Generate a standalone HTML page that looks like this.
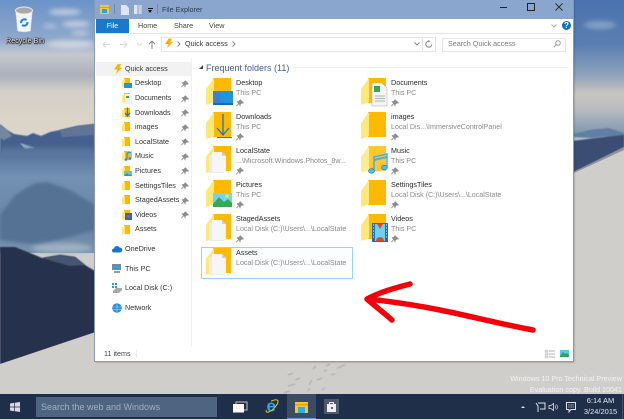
<!DOCTYPE html>
<html><head><meta charset="utf-8"><style>
html,body{margin:0;padding:0}
body{width:624px;height:419px;overflow:hidden;position:relative;font-family:"Liberation Sans",sans-serif;background:#d0cecb}
.a{position:absolute;white-space:nowrap}
svg{position:absolute;overflow:visible}
.t{position:absolute;white-space:nowrap;font-size:7.2px;line-height:10px;color:#2a2a2a}
.s{color:#8a8a8a;font-size:7.1px}
.n{color:#333}
</style></head><body>
<svg style="left:0;top:0" width="624" height="419" viewBox="0 0 624 419">
<defs>
<linearGradient id="skyL" gradientUnits="userSpaceOnUse" x1="0" y1="0" x2="0" y2="130"><stop offset="0" stop-color="#6b93c8"/><stop offset=".3" stop-color="#8fa8cc"/><stop offset=".42" stop-color="#c4c8cf"/><stop offset=".58" stop-color="#abb0bc"/><stop offset=".7" stop-color="#d4cfc8"/><stop offset="1" stop-color="#dcd5c9"/></linearGradient>
<linearGradient id="skyR" gradientUnits="userSpaceOnUse" x1="0" y1="0" x2="0" y2="135"><stop offset="0" stop-color="#4a72ad"/><stop offset=".33" stop-color="#5a7fb2"/><stop offset=".55" stop-color="#8ea1bb"/><stop offset=".7" stop-color="#c8c5c0"/><stop offset=".82" stop-color="#b5bac0"/><stop offset="1" stop-color="#7d96b0"/></linearGradient>
<linearGradient id="haze" gradientUnits="userSpaceOnUse" x1="0" y1="150" x2="0" y2="260"><stop offset="0" stop-color="#54709a"/><stop offset=".25" stop-color="#7391b2"/><stop offset=".7" stop-color="#6884a5"/><stop offset="1" stop-color="#7d95ae"/></linearGradient>
<filter id="b2" x="-50%" y="-300%" width="200%" height="700%"><feGaussianBlur stdDeviation="2.5"/></filter>
<filter id="b1" x="-20%" y="-20%" width="140%" height="140%"><feGaussianBlur stdDeviation="1.5"/></filter>
<filter id="b5" x="-20%" y="-20%" width="140%" height="140%"><feGaussianBlur stdDeviation=".6"/></filter>
</defs>
<rect width="95" height="135" fill="url(#skyL)"/>
<rect x="573" width="51" height="135" fill="url(#skyR)"/>
<g fill="#dfe2e6" filter="url(#b2)" opacity=".7">
<ellipse cx="65" cy="12" rx="16" ry="3"/><ellipse cx="76" cy="24" rx="14" ry="3"/><ellipse cx="50" cy="26" rx="7" ry="1.5"/><ellipse cx="70" cy="44" rx="24" ry="4"/><ellipse cx="80" cy="33" rx="9" ry="2"/>
</g>
<ellipse cx="600" cy="25" rx="16" ry="4" fill="#a3bad6" filter="url(#b2)" opacity=".6"/>
<polygon points="0,124 7,130 14,134 27,136 33,133 41,136 50,132 60,130 77,126 94,124 95,160 0,160" fill="#45608e" filter="url(#b5)"/>
<polygon points="0,125 7,130 12,136 4,140 0,138" fill="#75879f" filter="url(#b5)"/>
<polygon points="60,130 77,126 94,124 95,135 62,137" fill="#617496" filter="url(#b5)"/>
<polygon points="20,143 35,148 25,149" fill="#a8b6c9" filter="url(#b5)"/>
<rect x="0" y="153" width="95" height="100" fill="url(#haze)"/>
<rect x="0" y="148" width="95" height="10" fill="#5a769e" filter="url(#b2)"/>
<polygon points="0,215 15,195 35,183 48,182 70,190 95,205 95,230 40,245 0,240" fill="#557295" filter="url(#b1)"/>
<ellipse cx="62" cy="248" rx="30" ry="5" fill="#9db0c2" filter="url(#b2)"/>
<polygon points="0,247 15,247 35,255 42,258 60,255 75,257 85,265 95,271 95,335 0,366" fill="#25324e" filter="url(#b5)"/>
<polygon points="42,258 60,255 75,257 85,265 70,266" fill="#46566f" filter="url(#b5)"/>
<polygon points="573,134 590,130 608,128 624,133 624,150 573,172" fill="#607fa2" filter="url(#b5)"/>
<polygon points="573,137 592,138 610,136 590,141 573,141" fill="#cfd8df" opacity=".7" filter="url(#b5)"/>
<polygon points="573,141 595,138 624,135 624,147 573,172" fill="#3a4e72" filter="url(#b5)"/>
<polygon points="574,172 624,147 624,419 0,419 0,364" fill="#d0cecb"/>
<polygon points="574,172 624,147 624,150 574,173" fill="#55565c" opacity=".5"/>
<g stroke="#85878a" stroke-width="1" fill="none" opacity=".55" filter="url(#b5)">
<path d="M293 373l-5 2M300 378l-5 2M295 384l-7 2M290 391l-6 2M312 380l-3 5M316 366l-3 3M310 388l-2 3M327 370l-3 1M322 378l-5 2M330 364l-4 2M345 365l-8 3M335 374l-4 1M325 388l-3 2"/>
</g>
</svg>

<!-- recycle bin -->
<svg style="left:14px;top:6px" width="20" height="26" viewBox="0 0 20 26">
<path d="M1.500 4 L3.500 25 Q10 27 16.500 25 L18.500 4Z" fill="#f2f4f6" stroke="#c8ccd0" stroke-width=".5"/>
<ellipse cx="10" cy="4.500" rx="8.500" ry="3.500" fill="#a9a9a7" stroke="#e8e8e8"/>
<path d="M7 17a3.500 3.500 0 0 1 5.500-3M13.500 16a3.500 3.500 0 0 1-5.500 3" stroke="#1e88e0" stroke-width="2" fill="none"/>
</svg>
<div class="a" style="left:6px;top:36px;font-size:7.200px;line-height:10px;color:#eee;text-shadow:0 0 1px #000,0 1px 1px #000,1px 0 1px #000">Recycle Bin</div>

<div class="a" style="left:95px;top:0;width:478px;height:361px;background:#fff;box-shadow:0 0 0 1px #8799b8,1px 1px 2px rgba(30,30,30,.4)"></div>
<div class="a" style="left:95px;top:0;width:478px;height:19px;background:#8aa6cf"></div>

<!-- title icons -->
<svg style="left:100px;top:5px" width="10" height="10" viewBox="0 0 10 10"><rect x="0" y="0" width="9" height="9" fill="#f6c83a"/><rect x="0" y="2" width="9" height="1" fill="#e9a100"/><rect x="2" y="4" width="5" height="4" fill="#2aa4e8"/></svg>
<div class="a" style="left:114px;top:4px;width:1px;height:10px;background:#7488a8"></div>
<svg style="left:121px;top:5px" width="8" height="10" viewBox="0 0 8 10"><path d="M0 0h5l3 3v7H0z" fill="#dfe5ee"/></svg>
<svg style="left:134px;top:5px" width="8" height="9" viewBox="0 0 8 9"><rect width="3.400" height="9" fill="#dfe5ee"/><rect x="4.400" width="3.400" height="9" fill="#c4d0e2"/></svg>
<div class="a" style="left:148px;top:8px;width:5px;height:1px;background:#111"></div>
<div class="a" style="left:148px;top:10px;width:0;height:0;border:2.500px solid transparent;border-top:3px solid #111;border-bottom:0"></div>
<div class="a" style="left:157px;top:4px;width:1px;height:10px;background:#7488a8"></div>
<div class="t" style="left:162px;top:5px;color:#2c3a50">File Explorer</div>

<!-- window buttons -->
<div class="a" style="left:500px;top:7px;width:7px;height:1px;background:#222"></div>
<div class="a" style="left:527px;top:3px;width:6px;height:6px;border:1px solid #222"></div>
<svg style="left:555px;top:3px" width="8" height="8" viewBox="0 0 9 9"><path d="M.5.500l8 8M8.500.500l-8 8" stroke="#222" stroke-width="1"/></svg>

<!-- ribbon -->
<div class="a" style="left:96px;top:19px;width:33px;height:14px;background:#1979ca;color:#fff;font-size:7.200px;line-height:14px;text-align:center">File</div>
<div class="t" style="left:138px;top:21px;color:#444">Home</div>
<div class="t" style="left:174px;top:21px;color:#444">Share</div>
<div class="t" style="left:209px;top:21px;color:#444">View</div>
<div class="a" style="left:96px;top:33px;width:476px;height:1px;background:#e4e4e4"></div>
<svg style="left:551px;top:24px" width="6" height="4" viewBox="0 0 6 4"><path d="M.5.500L3 3 5.500.5" stroke="#aaa" fill="none"/></svg>
<div class="a" style="left:562px;top:21px;width:9px;height:9px;border-radius:50%;background:#0f6fc6;color:#fff;font-size:8px;line-height:9px;text-align:center;font-weight:bold">?</div>

<!-- nav row -->
<svg style="left:103px;top:40px" width="70" height="10" viewBox="0 0 70 10" fill="none">
<path d="M0 4.500h7M0 4.500L3 1.500M0 4.500L3 7.500" stroke="#d8d8d8"/>
<path d="M17 4.500h7M24 4.500L21 1.500M24 4.500L21 7.500" stroke="#d8d8d8"/>
<path d="M34 3l2.500 2.500L39 3" stroke="#dcdcdc"/>
<path d="M49 9V1M49 1L46 4M49 1L52 4" stroke="#888"/>
</svg>
<div class="a" style="left:161px;top:37px;width:273px;height:13px;border:1px solid #e6e6e6"></div>
<svg style="left:165px;top:38px" width="8" height="11" viewBox="0 0 9 11"><path d="M4 0h4L6 4h3L2 11l2-5H0z" fill="#f5b400"/></svg>
<svg style="left:177px;top:41px" width="4" height="6" viewBox="0 0 4 6"><path d="M.5.500L3 3 .5 5.500" stroke="#888" fill="none"/></svg>
<div class="t" style="left:185px;top:39px;color:#333">Quick access</div>
<svg style="left:232px;top:41px" width="4" height="6" viewBox="0 0 4 6"><path d="M.5.500L3 3 .5 5.500" stroke="#888" fill="none"/></svg>
<svg style="left:414px;top:42px" width="6" height="4" viewBox="0 0 6 4"><path d="M.5.500L3 3 5.500.5" stroke="#888" fill="none"/></svg>
<div class="a" style="left:422px;top:37px;width:1px;height:14px;background:#e6e6e6"></div>
<svg style="left:425px;top:40px" width="8" height="8" viewBox="0 0 8 8"><path d="M6.800 4.500A3 3 0 1 1 4 1.200" stroke="#888" fill="none"/><path d="M3.500 0l2 1.300-2 1.200z" fill="#888"/></svg>
<div class="a" style="left:442px;top:38px;width:122px;height:12px;border:1px solid #e6e6e6"></div>
<div class="t" style="left:448px;top:39px;color:#777">Search Quick access</div>
<svg style="left:553px;top:40px" width="8" height="8" viewBox="0 0 8 8"><circle cx="5" cy="3" r="2.300" stroke="#999" fill="none"/><path d="M3.300 4.700L.8 7.200" stroke="#999"/></svg>

<!-- nav pane -->
<div class="a" style="left:96px;top:62px;width:95px;height:14px;background:#f2f2f2"></div>
<div class="a" style="left:191px;top:58px;width:1px;height:288px;background:#f0f0f0"></div>
<svg style="left:114px;top:64px" width="8" height="10" viewBox="0 0 9 11"><path d="M4 0h4L6 4h3L2 11l2-5H0z" fill="#f5b400"/></svg>
<div class="t n" style="left:125px;top:64px">Quick access</div>

<svg width="0" height="0" style="left:0;top:0"><defs>
<g id="sf"><rect x="2" y="0" width="6" height="9" fill="#ffb900"/><path d="M0 2.500L3 1V9.500L0 9.500z" fill="#ffe97e"/></g>
<g id="pin"><path d="M4 1l4 4-1 .6-1-.4-1.600 1.600.1 1.200-.6.6L3 6 .6 8.400 0 8l2.200-2.600L.6 3.800l.6-.6 1.200.1L4 1.600z" fill="#8e8e8e"/></g>
<g id="lf"><rect x="8" y="0" width="18" height="25" fill="#ffb900"/><path d="M9 0L1 11V27L9 24z" fill="#fde879"/></g>
<g id="pg"><path d="M4 9h12l3 3v15H4z" fill="#ececec"/><path d="M7 6h10l4 4v16H7z" fill="#f6f6f6"/><path d="M17 6l4 4h-4z" fill="#d0d0d0"/></g>
</defs></svg>

<!-- nav children -->
<svg style="left:122px;top:78px" width="10" height="160" viewBox="0 0 10 160">
<use href="#sf" y="0"/><rect x="2" y="5" width="8" height="5" fill="#1d97e0"/>
<use href="#sf" y="15"/><path d="M3 16h5l2 2v8H3z" fill="#f1f1f1"/><rect x="4" y="18" width="3" height="2" fill="#39a854"/>
<use href="#sf" y="30"/><path d="M5.500 29.500v8M3 35l2.500 3L8 35" stroke="#1878c8" stroke-width="1.200" fill="none"/>
<use href="#sf" y="44"/><use href="#sf" y="59"/>
<use href="#sf" y="73"/><path d="M5 81V75l4-1v6" stroke="#2488d8" fill="none"/><circle cx="4" cy="81.500" r="1.300" fill="#2488d8"/><circle cx="8" cy="80.500" r="1.300" fill="#2488d8"/>
<use href="#sf" y="88"/><rect x="2" y="93" width="8" height="5" fill="#5ec8d8"/><path d="M2 98l3-3 2 2 1-1 2 2z" fill="#33a457"/>
<use href="#sf" y="103"/><use href="#sf" y="117"/>
<use href="#sf" y="132"/><rect x="3" y="135" width="7" height="7" fill="#2a6bb0"/><rect x="5" y="137" width="3" height="3" fill="#d94b3a"/>
<use href="#sf" y="147"/>
</svg>
<div class="t n" style="left:135px;top:78px">Desktop</div>
<div class="t n" style="left:135px;top:93px">Documents</div>
<div class="t n" style="left:135px;top:108px">Downloads</div>
<div class="t n" style="left:135px;top:122px">images</div>
<div class="t n" style="left:135px;top:137px">LocalState</div>
<div class="t n" style="left:135px;top:151px">Music</div>
<div class="t n" style="left:135px;top:166px">Pictures</div>
<div class="t n" style="left:135px;top:181px">SettingsTiles</div>
<div class="t n" style="left:135px;top:195px">StagedAssets</div>
<div class="t n" style="left:135px;top:210px">Videos</div>
<div class="t n" style="left:135px;top:224px">Assets</div>
<svg style="left:181px;top:79px" width="9" height="140" viewBox="0 0 9 140">
<use href="#pin" y="0"/><use href="#pin" y="15"/><use href="#pin" y="29"/><use href="#pin" y="44"/><use href="#pin" y="58"/><use href="#pin" y="73"/><use href="#pin" y="87"/><use href="#pin" y="102"/><use href="#pin" y="117"/><use href="#pin" y="131"/>
</svg>

<svg style="left:112px;top:245px" width="10" height="8" viewBox="0 0 10 8"><path d="M2 7.500a2 2 0 0 1 0-4 3 3 0 0 1 5.500-1 2.500 2.500 0 0 1 .6 5z" fill="#1878c8"/></svg>
<div class="t n" style="left:125px;top:244px">OneDrive</div>
<svg style="left:112px;top:264px" width="10" height="10" viewBox="0 0 10 10"><rect x="0" y="0" width="9" height="6" fill="#7b8a96"/><rect x="1" y="1" width="7" height="4" fill="#34a0d8"/><rect x="2" y="7" width="6" height="2" fill="#9a9a9a"/></svg>
<div class="t n" style="left:125px;top:264px">This PC</div>
<svg style="left:112px;top:283px" width="10" height="10" viewBox="0 0 10 10"><rect x="0" y="0" width="2" height="2" fill="#2a9ae0"/><rect x="3" y="0" width="2" height="2" fill="#2a9ae0"/><rect x="0" y="3" width="2" height="2" fill="#2a9ae0"/><rect x="3" y="3" width="2" height="2" fill="#2a9ae0"/><path d="M1 8l3-3h6v2l-3 3H1z" fill="#a9a9a9"/></svg>
<div class="t n" style="left:125px;top:283px">Local Disk (C:)</div>
<svg style="left:112px;top:303px" width="10" height="10" viewBox="0 0 10 10"><circle cx="5" cy="5" r="4.800" fill="#2a8fd8"/><path d="M1 4h8M1 6.500h8M5 .5v9" stroke="#a6dcf5" stroke-width=".6"/></svg>
<div class="t n" style="left:125px;top:303px">Network</div>

<!-- heading -->
<div class="a" style="left:199px;top:65px;width:0;height:0;border-left:4px solid transparent;border-bottom:4px solid #444"></div>
<div class="a" style="left:206px;top:62px;font-size:9px;line-height:12px;color:#4a5a9a">Frequent folders (11)</div>
<div class="a" style="left:293px;top:67px;width:275px;height:1px;background:#eeeeee"></div>

<!-- selected -->
<div class="a" style="left:201px;top:247px;width:150px;height:30px;border:1px solid #99d1ff;background:#fbfdff"></div>

<!-- folders left -->
<svg style="left:205px;top:78px" width="30" height="30" viewBox="0 0 30 30"><use href="#lf"/><rect x="8" y="13" width="20" height="14" fill="#1f95dd"/><rect x="9" y="14" width="6" height="12" fill="#3d7fd0"/><rect x="8" y="25" width="20" height="2" fill="#1a6db5"/></svg>
<svg style="left:205px;top:112px" width="30" height="30" viewBox="0 0 30 30"><use href="#lf"/><path d="M18 2v20M12 16l6 7 6-7" stroke="#1878c8" stroke-width="1.300" fill="none"/><rect x="12" y="25" width="15" height="1" fill="#1878c8"/></svg>
<svg style="left:205px;top:146px" width="30" height="30" viewBox="0 0 30 30"><use href="#lf"/><use href="#pg"/></svg>
<svg style="left:205px;top:180px" width="30" height="30" viewBox="0 0 30 30"><use href="#lf"/><rect x="8" y="13" width="19" height="14" fill="#73d6ee"/><path d="M8 27v-3l6-7 5 5 4-3 4 4v4z" fill="#35a858"/><circle cx="22" cy="16" r="1.800" fill="#f8e71c"/></svg>
<svg style="left:205px;top:214px" width="30" height="30" viewBox="0 0 30 30"><use href="#lf"/><use href="#pg"/></svg>
<svg style="left:205px;top:248px" width="30" height="30" viewBox="0 0 30 30"><use href="#lf"/><use href="#pg"/></svg>

<div class="t" style="left:236px;top:78px">Desktop</div><div class="t s" style="left:236px;top:88px">This PC</div>
<div class="t" style="left:236px;top:112px">Downloads</div><div class="t s" style="left:236px;top:122px">This PC</div>
<div class="t" style="left:236px;top:146px">LocalState</div><div class="t s" style="left:236px;top:156px">...\Microsoft.Windows.Photos_8w...</div>
<div class="t" style="left:236px;top:180px">Pictures</div><div class="t s" style="left:236px;top:190px">This PC</div>
<div class="t" style="left:236px;top:214px">StagedAssets</div><div class="t s" style="left:236px;top:224px">Local Disk (C:)\Users\...\LocalState</div>
<div class="t" style="left:236px;top:248px">Assets</div><div class="t s" style="left:236px;top:258px">Local Disk (C:)\Users\...\LocalState</div>

<!-- folders right -->
<svg style="left:360px;top:78px" width="30" height="30" viewBox="0 0 30 30"><use href="#lf"/><path d="M12 5h10l5 5v18H12z" fill="#f4f4f4" stroke="#aaa" stroke-width=".5"/><rect x="14" y="8" width="6" height="6" fill="#35a858"/><path d="M15 18h10M15 20.500h10M15 23h10" stroke="#999" stroke-width=".7"/></svg>
<svg style="left:360px;top:112px" width="30" height="30" viewBox="0 0 30 30"><use href="#lf"/></svg>
<svg style="left:360px;top:146px" width="30" height="30" viewBox="0 0 30 30"><g opacity=".8"><use href="#lf"/></g><path d="M14 25V11l13-3v13" stroke="#3fb4e8" stroke-width="1.500" fill="none"/><path d="M14 14l13-3" stroke="#3fb4e8" stroke-width="2"/><ellipse cx="11.500" cy="25" rx="3" ry="2.300" fill="#48bdf0" stroke="#1d80c0" stroke-width=".6"/><ellipse cx="24.500" cy="21.500" rx="3" ry="2.300" fill="#48bdf0" stroke="#1d80c0" stroke-width=".6"/></svg>
<svg style="left:360px;top:180px" width="30" height="30" viewBox="0 0 30 30"><use href="#lf"/></svg>
<svg style="left:360px;top:214px" width="30" height="30" viewBox="0 0 30 30"><use href="#lf"/><rect x="12" y="9" width="16" height="19" fill="#1d6fb8"/><rect x="15" y="10" width="10" height="17" fill="#6fd0ef"/><path d="M17 10h6l-3 5z" fill="#e04a2a"/><path d="M16 27a4 4 0 0 1 8 0z" fill="#e04a2a"/><path d="M13 11h1M13 14h1M13 17h1M13 20h1M13 23h1M26 11h1M26 14h1M26 17h1M26 20h1M26 23h1" stroke="#fff"/></svg>

<div class="t" style="left:391px;top:78px">Documents</div><div class="t s" style="left:391px;top:88px">This PC</div>
<div class="t" style="left:391px;top:112px">images</div><div class="t s" style="left:391px;top:122px">Local Dis...\ImmersiveControlPanel</div>
<div class="t" style="left:391px;top:146px">Music</div><div class="t s" style="left:391px;top:156px">This PC</div>
<div class="t" style="left:391px;top:180px">SettingsTiles</div><div class="t s" style="left:391px;top:190px">Local Disk (C:)\Users\...\LocalState</div>
<div class="t" style="left:391px;top:214px">Videos</div><div class="t s" style="left:391px;top:224px">This PC</div>

<svg style="left:236px;top:98px" width="9" height="9" viewBox="0 0 9 9"><use href="#pin"/></svg>
<svg style="left:236px;top:132px" width="9" height="9" viewBox="0 0 9 9"><use href="#pin"/></svg>
<svg style="left:236px;top:166px" width="9" height="9" viewBox="0 0 9 9"><use href="#pin"/></svg>
<svg style="left:236px;top:200px" width="9" height="9" viewBox="0 0 9 9"><use href="#pin"/></svg>
<svg style="left:236px;top:234px" width="9" height="9" viewBox="0 0 9 9"><use href="#pin"/></svg>
<svg style="left:391px;top:98px" width="9" height="9" viewBox="0 0 9 9"><use href="#pin"/></svg>
<svg style="left:391px;top:132px" width="9" height="9" viewBox="0 0 9 9"><use href="#pin"/></svg>
<svg style="left:391px;top:166px" width="9" height="9" viewBox="0 0 9 9"><use href="#pin"/></svg>
<svg style="left:391px;top:200px" width="9" height="9" viewBox="0 0 9 9"><use href="#pin"/></svg>
<svg style="left:391px;top:234px" width="9" height="9" viewBox="0 0 9 9"><use href="#pin"/></svg>

<!-- arrow -->
<svg style="left:0;top:0" width="624" height="419" viewBox="0 0 624 419"><path d="M533 330C500 324 470 316 440 310C415 305 395 302 368 299M410 284C395 288 380 292 367 299C375 306 384 313 392 320" stroke="#f5000a" stroke-width="5.500" fill="none" stroke-linecap="round" stroke-linejoin="round"/></svg>

<!-- status -->
<div class="t" style="left:104px;top:349px;color:#444">11 items</div>
<div class="a" style="left:136px;top:350px;width:1px;height:8px;background:#eee"></div>
<svg style="left:545px;top:349px" width="10" height="9" viewBox="0 0 10 9"><path d="M0 1h3v2H0zM0 4h3v2H0zM0 7h3v2H0z" fill="#ddd" stroke="#bbb" stroke-width=".4"/><path d="M4 2h6M4 5h6M4 8h6" stroke="#999" stroke-width=".8"/></svg>
<svg style="left:560px;top:350px" width="9" height="7" viewBox="0 0 9 7"><rect width="9" height="7" fill="#57c8e8"/><path d="M0 6l3-4 2 2 2-1 2 2v2H0z" fill="#2da558"/></svg>

<!-- watermark -->
<div class="a" style="right:2px;top:374px;font-size:7.200px;line-height:10px;color:rgba(255,255,255,.75)">Windows 10 Pro Technical Preview</div>
<div class="a" style="right:2px;top:385px;font-size:7.200px;line-height:10px;color:rgba(255,255,255,.75)">Evaluation copy. Build 10041</div>

<!-- taskbar -->
<div class="a" style="left:0;top:394px;width:624px;height:25px;background:#1f2f49"></div>
<svg style="left:10px;top:402px" width="10" height="10" viewBox="0 0 10 10" fill="#d8dce2"><path d="M0 1.500L4.300.8v3.800H0zM5 .7L10 0v4.600H5zM0 5.400h4.300v3.800L0 8.500zM5 5.400h5V10l-5-.7z"/></svg>
<div class="a" style="left:36px;top:397px;width:181px;height:20px;background:#4f6480"></div>
<div class="a" style="left:41px;top:401px;font-size:9px;line-height:12px;color:#a3afbf">Search the web and Windows</div>
<svg style="left:233px;top:402px" width="14" height="11" viewBox="0 0 14 11"><rect x="3" y="0" width="11" height="8" fill="none" stroke="#bfc5ce"/><rect x="0" y="2" width="11" height="8.500" fill="#fff"/></svg>
<svg style="left:265px;top:399px" width="14" height="14" viewBox="0 0 14 14"><text x="1.500" y="12.500" font-size="17" font-weight="bold" font-family="Liberation Sans,sans-serif" fill="#29a6ec">e</text><path d="M1.500 11C0 14 3 14 7 11 11 8 15 2 12 1 10 0 7 2 6 2" stroke="#eec021" fill="none"/></svg>
<div class="a" style="left:287px;top:394px;width:29px;height:25px;background:#3c4c65"></div>
<div class="a" style="left:287px;top:418px;width:29px;height:1px;background:#5aa0de"></div>
<svg style="left:295px;top:402px" width="13" height="11" viewBox="0 0 13 11"><rect width="13" height="11" fill="#f7c62f"/><rect y="2" width="13" height="1.500" fill="#e8a208"/><rect x="3" y="5" width="7" height="6" fill="#2bb1ea"/></svg>
<div class="a" style="left:324px;top:399px;width:15px;height:15px;background:#4e5a6c"></div>
<svg style="left:327px;top:402px" width="9" height="10" viewBox="0 0 9 10"><rect y="2" width="9" height="8" fill="#eee"/><path d="M2.500 2V.5h4V2" stroke="#eee" fill="none"/><rect x="4" y="5" width="2" height="2" fill="#666"/></svg>
<div class="a" style="left:521px;top:406px;width:0;height:0;border:2px solid transparent;border-bottom:2px solid #dfe3e8;border-top:0"></div>
<svg style="left:535px;top:402px" width="10" height="11" viewBox="0 0 10 11"><path d="M3 1h7v6H5" stroke="#dfe3e8" fill="none"/><path d="M1 1l2 3v6" stroke="#dfe3e8" fill="none"/></svg>
<svg style="left:549px;top:403px" width="9" height="8" viewBox="0 0 9 8"><path d="M0 2.500h2L4.500.5v7L2 5.500H0z" fill="none" stroke="#dfe3e8" stroke-width=".8"/><path d="M6 2.500a2 2 0 0 1 0 3M7.500 1.500a4 4 0 0 1 0 5" stroke="#dfe3e8" fill="none" stroke-width=".7"/></svg>
<svg style="left:566px;top:402px" width="10" height="11" viewBox="0 0 10 11"><path d="M.5.500h9v7H5L3 10V7.500H.5z" fill="none" stroke="#dfe3e8"/><path d="M2 3h6M2 5h6" stroke="#dfe3e8" stroke-width=".6"/></svg>
<div class="a" style="left:584px;top:396px;width:33px;text-align:center;font-size:7.500px;line-height:10px;color:#e4e8ee">6:14 AM</div>
<div class="a" style="left:582px;top:407px;width:37px;text-align:center;font-size:7.500px;line-height:10px;color:#e4e8ee">3/24/2015</div>
<div class="a" style="left:622px;top:394px;width:1px;height:25px;background:#46556e"></div>
</body></html>
